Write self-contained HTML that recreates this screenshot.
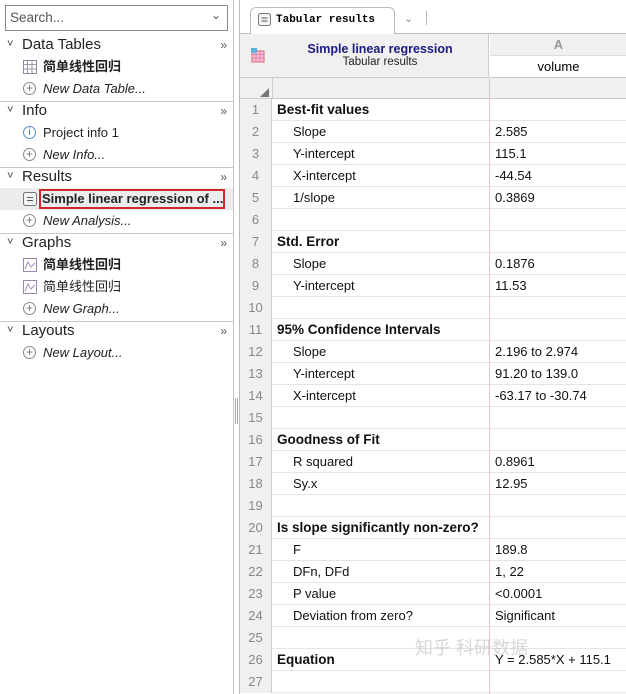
<!DOCTYPE html>
<html><head><meta charset="utf-8"><style>
*{margin:0;padding:0;box-sizing:border-box}
html,body{width:626px;height:694px;overflow:hidden}
body{background:#fff;font-family:"Liberation Sans","Noto Sans CJK SC",sans-serif;position:relative}
.abs{position:absolute}
#left{left:0;top:0;width:234px;height:694px;border-right:1px solid #c8c8c8;background:#fff}
.search{left:5px;top:5px;width:223px;height:26px;border:1px solid #8a8a8a;font-size:13.5px;color:#555;padding:4px 4px}
.tr{position:absolute;left:0;width:233px;height:22px;font-size:14px;line-height:22px;color:#222}
.sec{font-size:15px}
.sec .chev{position:absolute;left:7px;top:-1px;font-size:11px;color:#444}
.sec .t{position:absolute;left:22px}
.sec .r{position:absolute;right:6px;font-size:12px;color:#555}
.it{padding-left:43px;font-size:13px}
.it i{font-style:italic}
.ic{position:absolute;left:23px;top:4px;width:14px;height:14px}
.plus{position:absolute;left:23px;top:4px;width:13px;height:13px;border:1px solid #888;border-radius:50%;font-size:12px;line-height:10px;text-align:center;color:#777}
.sep{position:absolute;left:0;width:233px;height:1px;background:#c8c8c8}
#grid{left:239px;top:34px;width:387px;height:660px;border-left:1px solid #bbb;overflow:hidden}
.row{position:absolute;left:0;width:387px;height:22px;border-bottom:1px solid #e4e4e4;font-size:13px;line-height:22px;color:#111}
.num{position:absolute;left:0;width:32px;height:22px;background:#f0f0f0;color:#888;text-align:center;border-right:1px solid #ccc;font-size:13px}
.lab{position:absolute;left:37px}
.lab.b{font-weight:bold;font-size:13.5px}
.lab.ind{left:53px}
.val{position:absolute;left:255px}
</style></head><body>
<div id="left" class="abs">
<div class="search abs">Search...<span style="position:absolute;right:6px;top:2px;font-size:12px;color:#555">&#8964;</span></div>
<div class="tr sec" style="top:34px"><span class="chev">&#709;</span><span class="t">Data Tables</span><span class="r">»</span></div>
<div class="tr it" style="top:56px"><svg class="ic" viewBox="0 0 14 14"><rect x="0.5" y="0.5" width="13" height="13" fill="#fff" stroke="#889"/><path d="M0 4.5H14M0 9H14M4.5 0V14M9 0V14" stroke="#99a"/></svg><b>简单线性回归</b></div>
<div class="tr it" style="top:78px"><span class="plus">+</span><i>New Data Table...</i></div>
<div class="sep" style="top:101px"></div>
<div class="tr sec" style="top:100px"><span class="chev">&#709;</span><span class="t">Info</span><span class="r">»</span></div>
<div class="tr it" style="top:122px"><span class="plus" style="border-color:#5b8fc7;color:#3a70b0;font-size:10px;line-height:11px">i</span>Project info 1</div>
<div class="tr it" style="top:144px"><span class="plus">+</span><i>New Info...</i></div>
<div class="sep" style="top:167px"></div>
<div class="tr sec" style="top:166px"><span class="chev">&#709;</span><span class="t">Results</span><span class="r">»</span></div>
<div class="tr it" style="top:188px;background:#ececec"><svg class="ic" viewBox="0 0 14 14"><rect x="0.5" y="0.5" width="13" height="13" rx="2" fill="#f4f4f4" stroke="#777"/><path d="M4 5.5H10M4 8.5H10" stroke="#555"/></svg><span style="position:absolute;left:39px;top:1px;width:186px;height:20px;border:2px solid #d0262d"></span><b style="position:relative;left:-1px">Simple linear regression of ...</b></div>
<div class="tr it" style="top:210px"><span class="plus">+</span><i>New Analysis...</i></div>
<div class="sep" style="top:233px"></div>
<div class="tr sec" style="top:232px"><span class="chev">&#709;</span><span class="t">Graphs</span><span class="r">»</span></div>
<div class="tr it" style="top:254px"><svg class="ic" viewBox="0 0 14 14"><rect x="0.5" y="0.5" width="13" height="13" fill="#fff" stroke="#98a"/><path d="M2 11L5 4L8 9L12 5" stroke="#a8b" fill="none"/></svg><b>简单线性回归</b></div>
<div class="tr it" style="top:276px"><svg class="ic" viewBox="0 0 14 14"><rect x="0.5" y="0.5" width="13" height="13" fill="#fff" stroke="#98a"/><path d="M2 11L5 4L8 9L12 5" stroke="#a8b" fill="none"/></svg>简单线性回归</div>
<div class="tr it" style="top:298px"><span class="plus">+</span><i>New Graph...</i></div>
<div class="sep" style="top:321px"></div>
<div class="tr sec" style="top:320px"><span class="chev">&#709;</span><span class="t">Layouts</span><span class="r">»</span></div>
<div class="tr it" style="top:342px"><span class="plus">+</span><i>New Layout...</i></div>
</div>
<div class="abs" style="left:235px;top:398px;width:3px;height:26px;border-left:1px solid #aaa;border-right:1px solid #aaa"></div>
<div class="abs" style="left:239px;top:0;width:387px;height:34px;background:#fff;border-bottom:1px solid #bbb;border-left:1px solid #bbb"></div>
<div class="abs" style="left:250px;top:7px;width:145px;height:27px;border:1px solid #bbb;border-bottom:none;border-radius:6px 6px 0 0;background:#fff;font-family:'Liberation Mono',monospace;font-weight:bold;font-size:11px;line-height:24px;padding-left:25px">Tabular results
<svg style="position:absolute;left:7px;top:5px" width="13" height="13" viewBox="0 0 13 13"><rect x="0.5" y="0.5" width="12" height="12" rx="2" fill="#f4f4f4" stroke="#777"/><path d="M3.5 5H9.5M3.5 8H9.5" stroke="#555"/></svg></div>
<div class="abs" style="left:404px;top:12px;font-size:11px;color:#888">&#8964;</div>
<div class="abs" style="left:426px;top:11px;width:1px;height:14px;background:#bbb"></div>
<div id="grid" class="abs">
<div class="abs" style="left:0;top:0;width:249px;height:44px;background:#f0f0f0;border-bottom:1px solid #ccc;border-right:1px solid #ccc"></div>
<svg class="abs" style="left:10px;top:13px" width="16" height="16" viewBox="0 0 16 16"><rect x="2" y="4" width="12" height="11" fill="#fbe" stroke="#d66"/><path d="M2 7.5H14M2 11H14M6 4V15M10 4V15" stroke="#d88"/><rect x="1" y="1" width="6" height="5" fill="#5ab0e0"/></svg>
<div class="abs" style="left:40px;top:8px;width:200px;text-align:center;font-weight:bold;font-size:12.5px;color:#1a1a80">Simple linear regression</div>
<div class="abs" style="left:40px;top:22px;width:200px;text-align:center;font-size:11.5px;color:#222">Tabular results</div>
<div class="abs" style="left:250px;top:0;width:137px;height:22px;background:#f0f0f0;border-bottom:1px solid #ddd;text-align:center;color:#999;font-weight:bold;font-size:13px;line-height:22px">A</div>
<div class="abs" style="left:250px;top:22px;width:137px;height:22px;text-align:center;font-size:13px;line-height:22px;border-bottom:1px solid #ccc">volume</div>
<div class="abs" style="left:0;top:44px;width:387px;height:21px;background:#f0f0f0;border-bottom:1px solid #ccc"></div>
<div class="abs" style="left:32px;top:44px;width:1px;height:21px;background:#ccc"></div>
<div class="abs" style="left:249px;top:44px;width:1px;height:21px;background:#ccc"></div>
<svg class="abs" style="left:20px;top:54px" width="9" height="9"><path d="M9 0V9H0Z" fill="#777"/></svg>
<div class="abs" style="left:0;top:65px;width:387px;height:595px;overflow:hidden">
<div class="row" style="top:0"><span class="num">1</span><span class="lab b">Best-fit values</span></div>
<div class="row" style="top:22px"><span class="num">2</span><span class="lab ind">Slope</span><span class="val">2.585</span></div>
<div class="row" style="top:44px"><span class="num">3</span><span class="lab ind">Y-intercept</span><span class="val">115.1</span></div>
<div class="row" style="top:66px"><span class="num">4</span><span class="lab ind">X-intercept</span><span class="val">-44.54</span></div>
<div class="row" style="top:88px"><span class="num">5</span><span class="lab ind">1/slope</span><span class="val">0.3869</span></div>
<div class="row" style="top:110px"><span class="num">6</span></div>
<div class="row" style="top:132px"><span class="num">7</span><span class="lab b">Std. Error</span></div>
<div class="row" style="top:154px"><span class="num">8</span><span class="lab ind">Slope</span><span class="val">0.1876</span></div>
<div class="row" style="top:176px"><span class="num">9</span><span class="lab ind">Y-intercept</span><span class="val">11.53</span></div>
<div class="row" style="top:198px"><span class="num">10</span></div>
<div class="row" style="top:220px"><span class="num">11</span><span class="lab b">95% Confidence Intervals</span></div>
<div class="row" style="top:242px"><span class="num">12</span><span class="lab ind">Slope</span><span class="val">2.196 to 2.974</span></div>
<div class="row" style="top:264px"><span class="num">13</span><span class="lab ind">Y-intercept</span><span class="val">91.20 to 139.0</span></div>
<div class="row" style="top:286px"><span class="num">14</span><span class="lab ind">X-intercept</span><span class="val">-63.17 to -30.74</span></div>
<div class="row" style="top:308px"><span class="num">15</span></div>
<div class="row" style="top:330px"><span class="num">16</span><span class="lab b">Goodness of Fit</span></div>
<div class="row" style="top:352px"><span class="num">17</span><span class="lab ind">R squared</span><span class="val">0.8961</span></div>
<div class="row" style="top:374px"><span class="num">18</span><span class="lab ind">Sy.x</span><span class="val">12.95</span></div>
<div class="row" style="top:396px"><span class="num">19</span></div>
<div class="row" style="top:418px"><span class="num">20</span><span class="lab b">Is slope significantly non-zero?</span></div>
<div class="row" style="top:440px"><span class="num">21</span><span class="lab ind">F</span><span class="val">189.8</span></div>
<div class="row" style="top:462px"><span class="num">22</span><span class="lab ind">DFn, DFd</span><span class="val">1, 22</span></div>
<div class="row" style="top:484px"><span class="num">23</span><span class="lab ind">P value</span><span class="val">&lt;0.0001</span></div>
<div class="row" style="top:506px"><span class="num">24</span><span class="lab ind">Deviation from zero?</span><span class="val">Significant</span></div>
<div class="row" style="top:528px"><span class="num">25</span></div>
<div class="row" style="top:550px"><span class="num">26</span><span class="lab b">Equation</span><span class="val">Y = 2.585*X + 115.1</span></div>
<div class="row" style="top:572px"><span class="num">27</span></div>
<div class="abs" style="left:249px;top:0;width:1px;height:595px;background:#e8c8c8"></div>
</div>
<div class="abs" style="left:175px;top:600px;font-size:18px;color:rgba(200,200,200,0.7);white-space:nowrap">知乎 科研数据</div>
</div>
</body></html>
